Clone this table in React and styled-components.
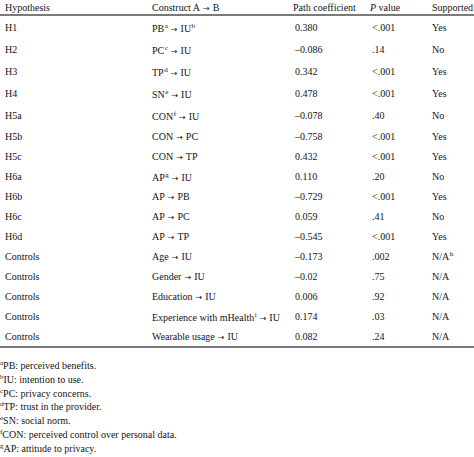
import React from "react";
import styled, { createGlobalStyle } from "styled-components";

const GlobalStyle = createGlobalStyle`
  html, body {
    margin: 0;
    padding: 0;
    background: #ffffff;
  }
  body {
    font-family: "Liberation Serif", "Times New Roman", serif;
    color: #141414;
  }
`;

const Page = styled.div`
  width: 474px;
  height: 457px;
  overflow: hidden;
  font-size: 10px;
`;

const Table = styled.div`
  display: flex;
  flex-flow: column nowrap;
  border-bottom: solid 2px #7a7a7a;
`;

const columns = "147px 141px 77px 62px 1fr";

const HeaderRow = styled.div`
  display: grid;
  grid-template-columns: ${columns};
  align-items: center;
  height: 14px;
  padding-left: 5px;
  border-bottom: solid 2px #7a7a7a;
  white-space: nowrap;
`;

const Row = styled.div`
  display: grid;
  grid-template-columns: ${columns};
  align-items: center;
  height: ${({ $tall }) => ($tall ? "22px" : "20px")};
  padding-left: 5px;
  white-space: nowrap;
`;

const Cell = styled.div`
  padding-left: ${({ $num }) => ($num ? "2px" : "0")};
  ${({ $drop }) => ($drop ? "padding-top: 3px;" : "")}
`;

const Sup = styled.sup`
  font-size: 7px;
  line-height: 0;
  vertical-align: 4px;
  margin-left: 0.5px;
`;

const Arrow = styled.span`
  font-family: "DejaVu Sans", sans-serif;
  font-size: 8px;
  margin: 0 3px;
`;

const Italic = styled.span`
  font-style: italic;
`;

const Notes = styled.div`
  display: flex;
  flex-flow: column nowrap;
  padding-top: 11px;
`;

const Note = styled.div`
  height: 13.8px;
  line-height: 13.8px;
  white-space: nowrap;
`;

const NoteMark = styled.sup`
  font-size: 7px;
  line-height: 0;
  vertical-align: 4px;
`;

const arrow = <Arrow>{"\u2192"}</Arrow>;

const rows = [
  { h: "H1", c: <>PB<Sup>a</Sup>{arrow}IU<Sup>b</Sup></>, p: "0.380", v: "<.001", s: "Yes", tall: true, drop: true },
  { h: "H2", c: <>PC<Sup>c</Sup>{arrow}IU</>, p: "\u20130.086", v: ".14", s: "No", tall: true, drop: true },
  { h: "H3", c: <>TP<Sup>d</Sup>{arrow}IU</>, p: "0.342", v: "<.001", s: "Yes", tall: true, drop: true },
  { h: "H4", c: <>SN<Sup>e</Sup>{arrow}IU</>, p: "0.478", v: "<.001", s: "Yes", tall: true, drop: true },
  { h: "H5a", c: <>CON<Sup>f</Sup>{arrow}IU</>, p: "\u20130.078", v: ".40", s: "No", tall: true, drop: true },
  { h: "H5b", c: <>CON{arrow}PC</>, p: "\u20130.758", v: "<.001", s: "Yes" },
  { h: "H5c", c: <>CON{arrow}TP</>, p: "0.432", v: "<.001", s: "Yes" },
  { h: "H6a", c: <>AP<Sup>g</Sup>{arrow}IU</>, p: "0.110", v: ".20", s: "No", drop: true },
  { h: "H6b", c: <>AP{arrow}PB</>, p: "\u20130.729", v: "<.001", s: "Yes" },
  { h: "H6c", c: <>AP{arrow}PC</>, p: "0.059", v: ".41", s: "No" },
  { h: "H6d", c: <>AP{arrow}TP</>, p: "\u20130.545", v: "<.001", s: "Yes" },
  { h: "Controls", c: <>Age{arrow}IU</>, p: "\u20130.173", v: ".002", s: <>N/A<Sup>h</Sup></> },
  { h: "Controls", c: <>Gender{arrow}IU</>, p: "\u20130.02", v: ".75", s: "N/A" },
  { h: "Controls", c: <>Education{arrow}IU</>, p: "0.006", v: ".92", s: "N/A" },
  { h: "Controls", c: <>Experience with mHealth<Sup>i</Sup>{arrow}IU</>, p: "0.174", v: ".03", s: "N/A", drop: true },
  { h: "Controls", c: <>Wearable usage{arrow}IU</>, p: "0.082", v: ".24", s: "N/A" },
];

const notes = [
  ["a", "PB: perceived benefits."],
  ["b", "IU: intention to use."],
  ["c", "PC: privacy concerns."],
  ["d", "TP: trust in the provider."],
  ["e", "SN: social norm."],
  ["f", "CON: perceived control over personal data."],
  ["g", "AP: attitude to privacy."],
];

export default function App() {
  return (
    <Page>
      <GlobalStyle />
      <Table>
        <HeaderRow>
          <Cell>Hypothesis</Cell>
          <Cell>Construct A{arrow}B</Cell>
          <Cell>Path coefficient</Cell>
          <Cell><Italic>P</Italic> value</Cell>
          <Cell>Supported</Cell>
        </HeaderRow>
        {rows.map((r, i) => (
          <Row key={i} $tall={r.tall}>
            <Cell>{r.h}</Cell>
            <Cell $drop={r.drop}>{r.c}</Cell>
            <Cell $num>{r.p}</Cell>
            <Cell $num>{r.v}</Cell>
            <Cell>{r.s}</Cell>
          </Row>
        ))}
      </Table>
      <Notes>
        {notes.map(([mark, text]) => (
          <Note key={mark}>
            <NoteMark>{mark}</NoteMark>
            {text}
          </Note>
        ))}
      </Notes>
    </Page>
  );
}
